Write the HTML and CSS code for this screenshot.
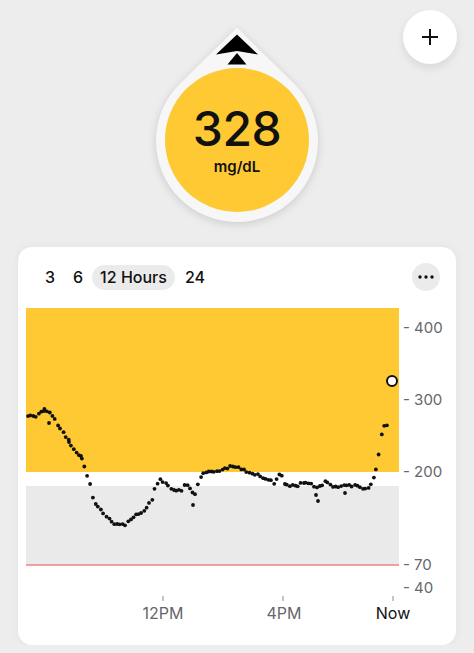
FILE: index.html
```html
<!DOCTYPE html>
<html lang="en">
<head>
    <meta charset="UTF-8">
    <meta name="viewport" content="width=device-width, initial-scale=1.0">
    <title>Glucose</title>
    <link rel="stylesheet" href="styles.css">
</head>
<body>
    <div class="header">
        <div class="drop">
            <svg class="drop-shape" viewBox="157 28 160 194">
                <path class="drop-ring" d="M237 29 L180.8 84.1 A80 80 0 1 0 293.2 84.1 Z"/>
                <path d="M237 34.5 L258 54.5 L237 51 L216 54.5 Z"/>
                <path d="M237 53 L246.5 64.5 L227.5 64.5 Z"/>
            </svg>
            <div class="reading">
                <span class="value">328</span>
                <span class="unit">mg/dL</span>
            </div>
        </div>
        <button class="add-button">
            <svg viewBox="0 0 20 20" width="20" height="20">
                <path d="M10 2 V18 M2 10 H18" stroke="#111" stroke-width="2" fill="none"/>
            </svg>
        </button>
    </div>

    <div class="card">
        <div class="card-head">
            <div class="tabs">
                <span class="tab">3</span>
                <span class="tab">6</span>
                <span class="tab active">12 Hours</span>
                <span class="tab">24</span>
            </div>
            <button class="more-button">
                <svg viewBox="0 0 16 4" width="16" height="4">
                    <circle cx="2" cy="2" r="1.7"/>
                    <circle cx="8" cy="2" r="1.7"/>
                    <circle cx="14" cy="2" r="1.7"/>
                </svg>
            </button>
        </div>
        <svg id="chart" class="chart" viewBox="18 300 438 340" width="438" height="340">
            <rect x="26" y="308" width="373" height="164" fill="#fec933"/>
            <rect x="26" y="486" width="373" height="79" fill="#ebeaeb"/>
            <line x1="26" y1="565" x2="399" y2="565" stroke="#ec8585" stroke-width="1.5"/>
            <g class="y-labels">
                <text x="403" y="333">- 400</text>
                <text x="403" y="405">- 300</text>
                <text x="403" y="477">- 200</text>
                <text x="403" y="570">- 70</text>
                <text x="403" y="593">- 40</text>
            </g>
            <g class="ticks">
                <line x1="163" y1="596" x2="163" y2="601"/>
                <line x1="283" y1="596" x2="283" y2="601"/>
                <line x1="393" y1="596" x2="393" y2="601"/>
            </g>
            <g class="x-labels">
                <text x="163" y="619">12PM</text>
                <text x="284" y="619">4PM</text>
                <text class="now" x="393" y="619">Now</text>
            </g>
            <g id="dots"></g>
            <circle cx="392" cy="381" r="5" fill="#fff" stroke="#111" stroke-width="2"/>
        </svg>
    </div>

    <script>
        var keys = [
            [28,416],[36,416],[40,413],[43,409],[47,412],[51,414],[55,420],[60,428],
            [65,436],[70,442],[75,452],[80,455],[84,463],[88,477],[90,484],[92,496],
            [95,503],[98,507],[103,513],[108,518],[113,523],[120,525],[125,525],[128,520],
            [135,516],[142,513],[148,505],[153,499],[155,487],[160,479],[165,483],[170,488],
            [177,490],[182,492],[185,483],[188,487],[192,492],[196,495],[198,485],[202,475],
            [210,472],[220,470],[230,467],[237,467],[243,469],[250,473],[257,474],[262,477],
            [267,478],[272,482],[275,485],[278,473],[282,476],[285,485],[290,485],[297,487],
            [302,483],[307,483],[312,483],[316,488],[322,486],[325,481],[330,485],[335,488],
            [340,486],[350,486],[357,486],[362,489],[367,488],[370,485],[374,477],[377,468],
            [379,454],[382,431],[384,426],[387,427],[389,410]
        ];
        var extra = [[49,423],[44,411],[193,505],[316,495],[318,501],[345,493],[69,442],[81,456]];

        function yAt(x) {
            for (var i = 1; i < keys.length; i++) {
                if (x <= keys[i][0]) {
                    var a = keys[i - 1], b = keys[i];
                    return a[1] + (b[1] - a[1]) * (x - a[0]) / (b[0] - a[0]);
                }
            }
            return keys[keys.length - 1][1];
        }

        var dots = document.getElementById("dots");
        function addDot(x, y) {
            var c = document.createElementNS("http://www.w3.org/2000/svg", "circle");
            c.setAttribute("cx", x.toFixed(1));
            c.setAttribute("cy", y.toFixed(1));
            c.setAttribute("r", "1.9");
            dots.appendChild(c);
        }

        var seed = 7;
        function jitter() {
            seed = (seed * 9301 + 49297) % 233280;
            return seed / 233280 - 0.5;
        }

        for (var x = 28; x <= 389; x += 2.7) {
            addDot(x + jitter(), yAt(x) + jitter() * 2.4);
        }
        extra.forEach(function (p) { addDot(p[0], p[1]); });
    </script>
</body>
</html>
```

FILE: styles.css
```css
body {
    font-family: Inter, "Noto Sans", sans-serif;
    background-color: #ededed;
    margin: 0;
    color: #111;
}
.header {
    position: relative;
    height: 247px;
    display: flex;
    justify-content: center;
}
.drop {
    position: relative;
    width: 160px;
    height: 194px;
    margin-top: 28px;
    padding-top: 40px;
    box-sizing: border-box;
    display: flex;
    justify-content: center;
}
.drop-shape {
    position: absolute;
    top: 0;
    left: 0;
    width: 160px;
    height: 194px;
    overflow: visible;
    filter: drop-shadow(0 2px 4px rgba(0, 0, 0, 0.14));
}
.drop-ring {
    fill: #f7f7f7;
    stroke: #f7f7f7;
    stroke-width: 2;
    stroke-linejoin: round;
}
.reading {
    position: relative;
    width: 144px;
    height: 144px;
    border-radius: 50%;
    background: #fec933;
    display: flex;
    flex-direction: column;
    align-items: center;
    justify-content: center;
}
.value {
    font-size: 48px;
    font-weight: 500;
    line-height: 48px;
    letter-spacing: -0.5px;
}
.unit {
    font-size: 15px;
    font-weight: 600;
    line-height: 18px;
    margin-top: 5px;
}
.add-button {
    position: absolute;
    top: 10px;
    right: 17px;
    width: 54px;
    height: 54px;
    border: none;
    border-radius: 50%;
    background: #fff;
    box-shadow: 0 4px 8px rgba(0, 0, 0, 0.09);
    display: flex;
    align-items: center;
    justify-content: center;
    padding: 0;
}
.card {
    margin: 0 18px;
    height: 398px;
    background: #fff;
    border-radius: 14px;
    box-shadow: 0 0 10px rgba(0, 0, 0, 0.05);
    overflow: hidden;
}
.card-head {
    display: flex;
    align-items: center;
    justify-content: space-between;
    padding: 16px 16px 0 18px;
    height: 28px;
}
.tabs {
    display: flex;
    align-items: center;
}
.tab {
    font-size: 16px;
    font-weight: 500;
    line-height: 25px;
    padding: 0 9px;
    border-radius: 13px;
}
.tab.active {
    background: #ebebeb;
    padding: 0 8px;
    margin-right: 1px;
}
.more-button {
    width: 28px;
    height: 28px;
    border: none;
    border-radius: 50%;
    background: #ebebeb;
    display: flex;
    align-items: center;
    justify-content: center;
    padding: 0;
}
.more-button circle {
    fill: #111;
}
.chart {
    display: block;
    margin-top: 9px;
}
.chart #dots circle {
    fill: #111;
}
.y-labels text {
    font-size: 15px;
    fill: #66666b;
}
.x-labels text {
    font-size: 16px;
    fill: #66666b;
    text-anchor: middle;
}
.x-labels .now {
    fill: #111;
}
.ticks line {
    stroke: #8a8a8e;
    stroke-width: 1;
}
```
